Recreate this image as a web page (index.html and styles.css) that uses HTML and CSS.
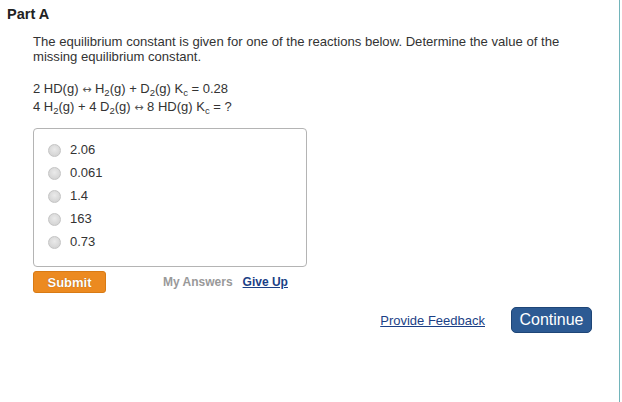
FILE: index.html
```html
<!DOCTYPE html>
<html>
<head>
<meta charset="utf-8">
<link rel="stylesheet" href="styles.css">
</head>
<body>
<div class="page">
  <div class="part-title">Part A</div>
  <div class="content">
    <p class="question">The equilibrium constant is given for one of the reactions below. Determine the value of the missing equilibrium constant.</p>
    <div class="equations">
      <div class="eq">2 HD(g) <span class="arrow">&#8596;</span> H<sub>2</sub>(g) + D<sub>2</sub>(g) K<sub>c</sub> = 0.28</div>
      <div class="eq">4 H<sub>2</sub>(g) + 4 D<sub>2</sub>(g) <span class="arrow">&#8596;</span> 8 HD(g) K<sub>c</sub> = ?</div>
    </div>
    <div class="choices">
      <label class="choice"><span class="radio"></span><span>2.06</span></label>
      <label class="choice"><span class="radio"></span><span>0.061</span></label>
      <label class="choice"><span class="radio"></span><span>1.4</span></label>
      <label class="choice"><span class="radio"></span><span>163</span></label>
      <label class="choice"><span class="radio"></span><span>0.73</span></label>
    </div>
    <div class="actions">
      <button class="submit">Submit</button>
      <span class="my-answers">My Answers</span>
      <a class="give-up" href="#">Give Up</a>
    </div>
  </div>
  <div class="footer">
    <a class="feedback" href="#">Provide Feedback</a>
    <button class="continue">Continue</button>
  </div>
</div>
</body>
</html>
```
FILE: styles.css
```css
html, body {
  margin: 0;
  padding: 0;
  background: #fff;
}
body {
  font-family: "Liberation Sans", Arial, sans-serif;
  color: #333;
}
.page {
  width: 620px;
  height: 402px;
  box-sizing: border-box;
  border-right: 1px solid #72b4ba;
}
.part-title {
  font-weight: bold;
  font-size: 14.5px;
  line-height: 16px;
  color: #222;
  padding: 6px 0 0 7px;
}
.content {
  padding: 12px 0 0 33px;
}
.question {
  margin: 0;
  font-size: 13.1px;
  line-height: 15px;
  width: 560px;
}
.equations {
  margin-top: 16px;
  font-size: 13px;
  line-height: 17px;
}
.arrow {
  font-family: "DejaVu Sans", sans-serif;
  font-size: 11px;
  color: #555;
}
.eq sub {
  font-size: 9.5px;
  line-height: 0;
  vertical-align: -3px;
}
.choices {
  margin-top: 12px;
  width: 274px;
  height: 139px;
  box-sizing: border-box;
  border: 1px solid #b4b4b4;
  border-radius: 4px;
  padding: 14px 0 0 14px;
  display: flex;
  flex-direction: column;
  gap: 9px;
}
.choice {
  display: flex;
  align-items: center;
  gap: 9px;
  font-size: 13px;
  line-height: 14px;
}
.radio {
  width: 11px;
  height: 11px;
  border-radius: 50%;
  border: 1px solid #c4c4c4;
  background: radial-gradient(circle at 50% 40%, #eaeaea 0%, #d6d6d6 70%, #cfcfcf 100%);
  box-sizing: content-box;
}
.actions {
  margin-top: 4px;
  display: flex;
  align-items: center;
}
.submit {
  width: 73px;
  height: 22px;
  padding: 0;
  border: 1px solid #d87a14;
  border-radius: 3px;
  background: #ec8a20;
  color: #fff;
  font-family: "Liberation Sans", Arial, sans-serif;
  font-weight: bold;
  font-size: 13px;
  text-shadow: 0 0 1px #9a5206;
}
.my-answers {
  margin-left: 57px;
  font-size: 12px;
  font-weight: bold;
  color: #999;
}
.give-up {
  margin-left: 10px;
  font-size: 12px;
  font-weight: bold;
  color: #1b3f86;
}
.footer {
  display: flex;
  justify-content: flex-end;
  align-items: center;
  gap: 26px;
  padding: 14px 27px 0 0;
}
.feedback {
  font-size: 13px;
  color: #1b3f86;
}
.continue {
  width: 81px;
  height: 26px;
  padding: 0;
  border: 1px solid #1e4577;
  border-radius: 5px;
  background: #2c5a93;
  color: #fff;
  font-family: "Liberation Sans", Arial, sans-serif;
  font-size: 16px;
}
```
